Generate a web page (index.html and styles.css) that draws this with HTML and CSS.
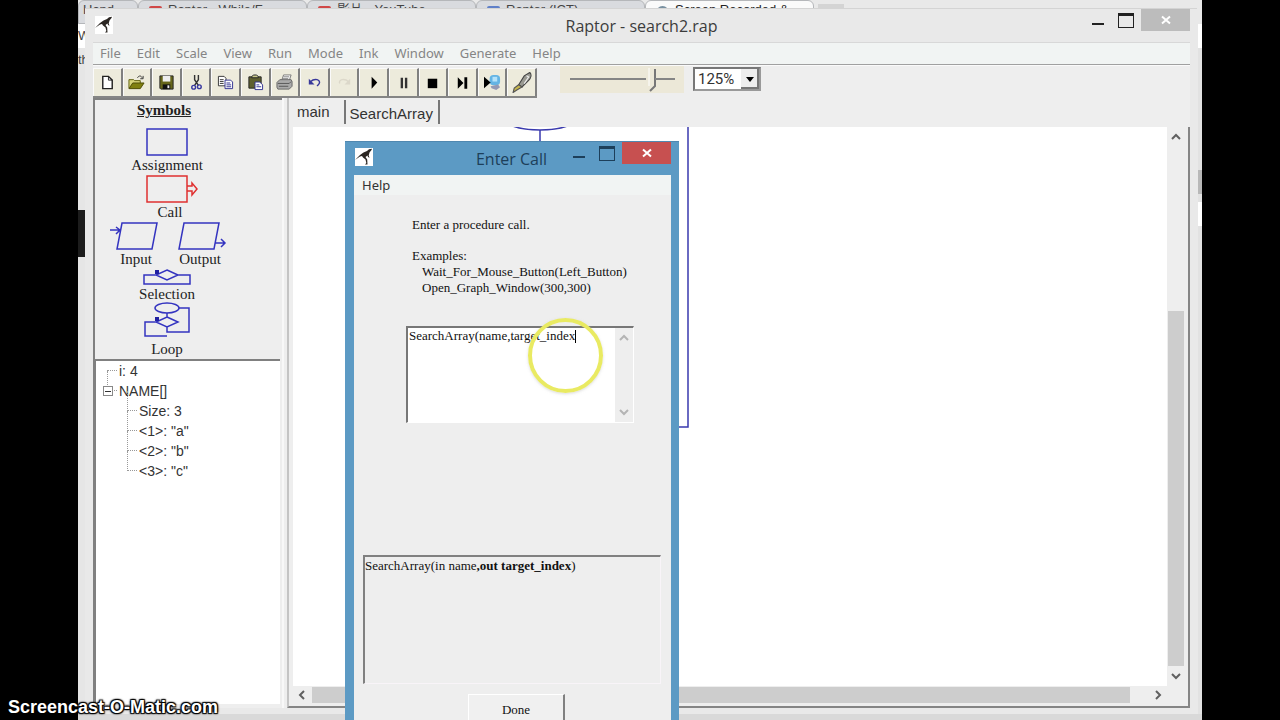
FILE: index.html
```html
<!DOCTYPE html>
<html lang="en">
<head>
<meta charset="utf-8">
<title>Raptor - search2.rap</title>
<link rel="stylesheet" href="styles.css">
</head>
<body>
<svg class="defs" width="0" height="0" aria-hidden="true">
  <symbol id="raptor" viewBox="0 0 18 18">
    <path fill="#fff" d="M0 0h18v18H0z"/>
    <path fill="#2b2622" d="M17 .800l-3 .500-2 1.700-3.500 1.500-3.500 2.500L0 12l5-3.500 2-.500 1 1.500 2.500 2 .800 3.500-1.300 1.500h2.500l-.300-5-1.700-2.500 2-1.500.500 1.500 1.500.800-.800-2.300.800-3 2-2.500z"/>
  </symbol>
  <symbol id="up" viewBox="0 0 10 10"><path d="M1 7l4-4 4 4" fill="none" stroke="currentColor" stroke-width="2"/></symbol>
  <symbol id="cross" viewBox="0 0 10 10"><path d="M1 1.500l8 7M9 1.500l-8 7" stroke="#fff" stroke-width="2"/></symbol>
</svg>

<div class="desktop">
  <div class="browser">
    <div class="tabs">
      <div class="tab">Hand</div>
      <div class="tab"><i class="fav red"></i>Raptor - While/F</div>
      <div class="tab"><i class="fav red"></i>影片 - YouTube</div>
      <div class="tab"><i class="fav blue"></i>Raptor (ICT)</div>
      <div class="tab current"><i class="fav round"></i>Screen Recorded &amp;</div>
      <div class="new"></div>
    </div>
    <div class="edges">
      <div class="edge-left"><span class="addr">W</span><span class="mark">th</span><i class="dark"></i></div>
      <div class="edge-right"><i class="white"></i><i class="thumb"></i><i class="white"></i></div>
    </div>
    <div class="bottom"></div>
  </div>

  <main class="window">
    <header class="title">
      <svg class="logo"><use href="#raptor"/></svg>
      <h1>Raptor - search2.rap</h1>
      <div class="controls">
        <button class="min" aria-label="Minimize"></button>
        <button class="max" aria-label="Maximize"></button>
        <button class="close" aria-label="Close"><svg width="10" height="10"><use href="#cross"/></svg></button>
      </div>
    </header>
    <nav class="menu">
      <button>File</button><button>Edit</button><button>Scale</button><button>View</button><button>Run</button><button>Mode</button><button>Ink</button><button>Window</button><button>Generate</button><button>Help</button>
    </nav>
    <div class="toolbar">
      <div class="tools">
        <button aria-label="New"><svg viewBox="0 0 18 18"><path d="M4 2.500h6l4 4v9H4z" fill="#fff" stroke="#222" stroke-width="1.500"/><path d="M10 2.500v4h4" fill="none" stroke="#222"/></svg></button>
        <button aria-label="Open"><svg viewBox="0 0 18 18"><path d="M1 15V6h5l1 1h6v3" fill="#d9d67c" stroke="#5f5f0d"/><path d="M1 15.500l4-6h12l-4 6z" fill="#808010" stroke="#4b4b05"/><path d="M10 4c2-3 4-2 5 0m1-2v3h-3" fill="none" stroke="#333"/></svg></button>
        <button aria-label="Save"><svg viewBox="0 0 18 18"><path d="M2 2h14v14H3l-1-1z" fill="#66661a" stroke="#222"/><path d="M5 2h8v6H5z" fill="#eee"/><path d="M5 11h8v5H5z" fill="#111"/><path d="M10 12h2v3h-2z" fill="#eee"/></svg></button>
        <button aria-label="Cut"><svg viewBox="0 0 18 18"><path d="M7 1v5l4 6M11 1v5l-4 6" fill="none" stroke="#333" stroke-width="1.500"/><circle cx="6" cy="14" r="2" fill="none" stroke="#3838a0" stroke-width="1.500"/><circle cx="12" cy="13.500" r="2" fill="none" stroke="#3838a0" stroke-width="1.500"/></svg></button>
        <button aria-label="Copy"><svg viewBox="0 0 18 18"><path d="M1.500 2.500h6l2 2v8h-8z" fill="#fff" stroke="#333"/><path d="M3 6h4M3 8h4M3 10h4" stroke="#333"/><path d="M8.500 6.500h6l2 2v7h-8z" fill="#fff" stroke="#303090"/><path d="M10 9.500h4M10 11.500h5M10 13.500h5" stroke="#303090"/></svg></button>
        <button aria-label="Paste"><svg viewBox="0 0 18 18"><path d="M2 3h13v12H2z" fill="#5f6030" stroke="#222"/><path d="M5 4c0-2 1-3 3.500-3S12 2 12 4z" fill="#c9c98c" stroke="#222"/><path d="M8.500 8.500h5l3 3v5h-8z" fill="#fff" stroke="#303090"/><path d="M10 11.500h3M10 13.500h5" stroke="#303090"/></svg></button>
        <button aria-label="Print"><svg viewBox="0 0 18 18"><path d="M6 7l2-6h8l-2 6z" fill="#fff" stroke="#777"/><path d="M8 3h6M7 5h6" stroke="#777"/><path d="M1 9l3-3h12l1 2v5l-3 3H2l-1-2z" fill="#aaa" stroke="#666"/><path d="M2 10h12l2-2M3 13h10" fill="none" stroke="#555"/></svg></button>
        <button aria-label="Undo"><svg viewBox="0 0 18 18"><path d="M5 8c4-4 11-2 9 2-.500 1-1 2-2.500 2.500" fill="none" stroke="#38389a" stroke-width="1.500"/><path d="M3 5v6h6z" fill="#38389a"/></svg></button>
        <button aria-label="Redo" disabled><svg viewBox="0 0 18 18"><path d="M13 8c-4-4-11-2-9 2" fill="none" stroke="#dcd8ca" stroke-width="1.500"/><path d="M15 5v6H9z" fill="#dcd8ca"/></svg></button>
        <button aria-label="Play"><svg viewBox="0 0 18 18"><path d="M7 3l6 6-6 6.500z"/></svg></button>
        <button aria-label="Pause"><svg viewBox="0 0 18 18"><path d="M6 4h2.500v11H6zM10.500 4H13v11h-2.500z" fill="#333"/></svg></button>
        <button aria-label="Stop"><svg viewBox="0 0 18 18"><path d="M4 5h10v10H4z"/></svg></button>
        <button aria-label="Step"><svg viewBox="0 0 18 18"><path d="M4 3.500l6 6-6 6zM11 3.500h3v12h-3z"/></svg></button>
        <button aria-label="Test server"><svg viewBox="0 0 18 18"><rect x="6" y="1" width="11" height="11" rx="4" fill="#64b4e4"/><path d="M9 3h5v5H9z" fill="#b4e2fa"/><path d="M7 13l8-2 2 3-4 3-5-2z" fill="#9399b4"/><path d="M0 3l7 6-7 6z"/></svg></button>
        <button class="pen" aria-label="Pen"><svg viewBox="0 0 18 18"><path d="M16 0c2 2 1 5-1 7l-6 6-3-2 5-8z" fill="#9a9a92" stroke="#444"/><path d="M6 11l3 2-5 3-3 2 1-4z" fill="#c4b44c" stroke="#555"/><path d="M13 3l2 1-4 6" fill="none" stroke="#eee"/></svg></button>
      </div>
      <input class="speed" type="range" min="0" max="100" value="90" aria-label="Speed">
      <select class="zoom" aria-label="Zoom"><option>125%</option></select>
    </div>

    <div class="work">
      <aside class="side">
        <section class="symbols">
          <h2>Symbols</h2>
          <button><svg width="62" height="28"><path d="M11 1h40v26H11z"/></svg>Assignment</button>
          <button class="call"><svg width="62" height="28"><path d="M11 1h40v26H11zM51 11h5V8l5 6-5 6v-4h-5"/></svg><span>Call</span></button>
          <div class="pair">
            <button><svg width="54" height="28"><path d="M13 1h35l-5 26H8zM1 8h10M7 5l4 3-4 4"/></svg>Input</button>
            <button><svg width="54" height="28"><path d="M11 1h35l-5 26H6zM42 21h10M48 17l4 4-4 4"/></svg>Output</button>
          </div>
          <button class="tight"><svg width="50" height="16"><path d="M14 6H2v9h46V6H36M25 1l11 5-11 5-11-5z"/><path class="dot" d="M13 1h4v4h-4z"/></svg>Selection</button>
          <button class="loop"><svg width="50" height="36"><ellipse cx="25" cy="6" rx="12" ry="5"/><path d="M37 6h10v24H25v-5M25 11v4M25 15l11 5-11 5-11-5zM14 20H3v14h22"/><path class="dot" d="M13 15h4v4h-4z"/></svg>Loop</button>
        </section>
        <section class="watch">
          <ul class="tree">
            <li>i: 4</li>
            <li class="open"><button aria-label="Collapse NAME"></button>NAME[]
              <ul><li>Size: 3</li><li>&lt;1&gt;: "a"</li><li>&lt;2&gt;: "b"</li><li>&lt;3&gt;: "c"</li></ul>
            </li>
          </ul>
        </section>
      </aside>
      <section class="charts">
        <div class="chart-tabs"><button class="on">main</button><button>SearchArray</button></div>
        <div class="view">
          <div class="canvas"><svg width="420" height="310"><ellipse cx="247" cy="-10" rx="38" ry="13"/><path d="M247 3v20M300 300h95V0"/></svg></div>
          <div class="vbar"><svg><use href="#up"/></svg><i></i><svg class="down"><use href="#up"/></svg></div>
          <div class="hbar"><svg class="left"><use href="#up"/></svg><i></i><svg class="right"><use href="#up"/></svg></div>
        </div>
      </section>
    </div>
  </main>

  <div class="dialog" role="dialog" aria-label="Enter Call">
    <header class="title">
      <svg class="logo"><use href="#raptor"/></svg>
      <h2>Enter Call</h2>
      <div class="controls">
        <button class="min" aria-label="Minimize"></button>
        <button class="max" aria-label="Maximize"></button>
        <button class="close" aria-label="Close"><svg width="10" height="10"><use href="#cross"/></svg></button>
      </div>
    </header>
    <nav class="dialog-menu"><button>Help</button></nav>
    <div class="form">
      <label class="intro" for="call">Enter a procedure call.</label>
      <div class="examples">Examples:
        <p>Wait_For_Mouse_Button(Left_Button)</p>
        <p>Open_Graph_Window(300,300)</p>
      </div>
      <div class="entry">
        <textarea id="call" spellcheck="false">SearchArray(name,target_index</textarea>
        <div class="entry-bar"><svg><use href="#up"/></svg><svg class="down"><use href="#up"/></svg></div>
        <i class="caret"></i>
        <i class="ring"></i>
      </div>
      <div class="hint">SearchArray(in name<b>,out target_index</b>)</div>
      <button class="done">Done</button>
    </div>
  </div>
</div>
<div class="watermark">Screencast-O-Matic.com</div>
</body>
</html>
```
FILE: styles.css
```css
* { box-sizing: border-box; }
body { margin: 0; background: #000; font-family: "Liberation Sans", Arial, sans-serif; overflow: hidden; }
h1, h2, p, ul { margin: 0; padding: 0; font-weight: normal; }
ul { list-style: none; }
button { border: 0; padding: 0; background: none; font: inherit; color: inherit; }
.defs { position: absolute; }

.desktop { position: relative; height: 100vh; margin: 0 78px; background: #e9e9e9; overflow: hidden; }

/* browser behind the windows */
.browser { display: flex; flex-direction: column; height: 100%; font: 13px/16px "Liberation Sans", "Noto Sans CJK TC", sans-serif; color: #444; }
.tabs { display: flex; height: 24px; }
.tab { display: flex; gap: 6px; width: 169px; padding: 1px 10px 0; white-space: nowrap; overflow: hidden; background: #d9dbdf; border: 1px solid #b5b7ba; border-radius: 6px 6px 0 0; }
.tab:first-child { width: 60px; padding-left: 4px; }
.tab.current { background: #fafafa; color: #222; }
.new { width: 26px; background: #d4d4d4; height: 9px; margin: 4px; }
.fav { width: 13px; height: 13px; margin-top: 4px; background: #d04848; border-radius: 2px; }
.fav.blue { background: #fff; border: 2px solid #6080c8; }
.fav.round { background: #7890a0; border-radius: 50%; }
.edges { display: flex; justify-content: space-between; flex: 1; }
.edge-left { width: 7px; overflow: hidden; display: flex; flex-direction: column; background: #e6e6e6; }
.edge-left span { height: 24px; line-height: 24px; }
.edge-left .addr { background: #fff; }
.edge-left .dark { margin-top: 138px; height: 47px; background: #1c1c1c; }
.edge-right { width: 4px; display: flex; flex-direction: column; gap: 8px; background: #e2e2e2; }
.edge-right .white { height: 24px; background: #fff; }
.edge-right .thumb { height: 24px; margin-top: 114px; background: #b8b8b8; }
.bottom { height: 6px; background: #d9d9d9; }

/* window frames */
.window { position: absolute; top: 8px; left: 7px; right: 5px; bottom: 6px; display: flex; flex-direction: column; padding: 0 7px 6px 8px; background: #e9e9e9; border-top: 1px solid #d4d4d4; }
.title { position: relative; display: flex; align-items: center; justify-content: center; height: 33px; font: 16px/24px "Open Sans", "Noto Sans", sans-serif; color: #3c3c3c; }
.title h1, .title h2 { font-size: inherit; }
.logo { position: absolute; left: 2px; top: 7px; width: 18px; height: 18px; }
.controls { position: absolute; right: 0; top: 0; display: flex; }
.controls button { width: 28px; height: 22px; display: flex; align-items: center; justify-content: center; }
.controls .min::before { content: ""; width: 12px; height: 2px; background: #222; margin-top: 8px; }
.controls .max::before { content: ""; width: 14px; height: 11px; border: 1px solid #222; border-top-width: 3px; }
.controls .close { width: 49px; margin-left: 1px; background: #bcbcbc; }

.menu { display: flex; gap: 16px; height: 23px; padding: 0 7px; background: #f1f4f3; border-top: 1px solid #d8d8d8; border-bottom: 1px solid #a0a0a0; font: 13px/20px "Noto Sans", sans-serif; color: #858585; }
.menu button { height: 19px; }

.toolbar { display: flex; align-items: flex-start; height: 33px; background: #eee; border-top: 1px solid #fafafa; }
.tools { display: flex; width: 444px; margin-top: 2px; border-bottom: 2px solid #858585; }
.tools button { flex: 1; height: 28px; display: flex; align-items: center; justify-content: center; background: #edebdc; border: 1px solid #fafafa; border-right: 2px solid #808080; border-bottom: 0; }
.tools svg { width: 17px; height: 17px; }
.tools .pen svg { width: 20px; height: 21px; }
.speed { appearance: none; width: 124px; height: 27px; margin: 0 0 0 23px; padding: 0 10px; background: linear-gradient(#858585, #858585) 50% 12px / 105px 2px no-repeat #ece8d8; }
.speed::-webkit-slider-thumb { appearance: none; width: 20px; height: 27px; background: #ece8d8 url("data:image/svg+xml,%3Csvg xmlns='http://www.w3.org/2000/svg' width='20' height='27'%3E%3Cpath d='M9 3v17l-5 5' fill='none' stroke='%23777' stroke-width='2'/%3E%3Cpath d='M3 2v18' stroke='%23fff'/%3E%3Cpath d='M9 13h11' stroke='%23858585' stroke-width='2'/%3E%3C/svg%3E"); }
.zoom { appearance: none; width: 68px; height: 24px; margin: 1px 0 0 9px; padding: 0 0 0 3px; border: 2px solid #777; border-right-color: #999; border-bottom-color: #999; border-radius: 0; color: #333; font: 15px/18px Roboto, sans-serif; background: #fff url("data:image/svg+xml,%3Csvg xmlns='http://www.w3.org/2000/svg' width='18' height='20'%3E%3Cpath d='M0 0h18v20H0z' fill='%23eee'/%3E%3Cpath d='M17 0v19H0' fill='none' stroke='%23777' stroke-width='2'/%3E%3Cpath d='M5 8h8l-4 5z'/%3E%3C/svg%3E") right center no-repeat; }

/* work area */
.work { display: flex; flex: 1; min-height: 0; background: #eee; }
.side { display: flex; flex-direction: column; width: 191px; padding-bottom: 4px; border-right: 2px solid #f8f8f8; }
.symbols { display: flex; flex-direction: column; align-items: center; height: 261px; padding: 2px 43px 0 0; border-top: 2px solid #808080; border-left: 2px solid #808080; font: 15px/17px "Liberation Serif", serif; color: #222; }
.symbols h2 { font-size: 15px; font-weight: bold; text-decoration: underline; line-height: 17px; margin-bottom: 9px; padding-right: 6px; }
.symbols button { display: flex; flex-direction: column; align-items: center; height: 47px; gap: 1px; color: #222; }
.symbols svg { flex: none; fill: none; stroke: #3434c0; stroke-width: 1.5; }
.symbols .call svg { stroke: #e03030; }
.symbols .call span { padding-left: 6px; }
.symbols svg .dot { fill: #2020a0; stroke: none; }
.pair { display: flex; gap: 10px; padding-left: 2px; }
.symbols .tight { height: 33px; }
.symbols .loop { gap: 3px; height: 57px; }
.watch { flex: 1; margin-right: 2px; padding: 0 0 0 8px; background: #fff; border-top: 2px solid #808080; border-left: 3px solid #808080; font-size: 14px; line-height: 20px; color: #333; }
.tree li { position: relative; padding-left: 15px; }
.tree li::before { content: ""; position: absolute; left: 3px; top: 9px; width: 10px; border-top: 1px dotted #999; }
.tree > li:first-child::after { content: ""; position: absolute; left: 3px; top: 10px; height: 16px; border-left: 1px dotted #999; }
.tree ul li { padding-left: 20px; }
.tree ul li::before { left: 8px; }
.tree ul li::after { content: ""; position: absolute; left: 8px; top: -10px; height: 20px; border-left: 1px dotted #999; }
.open > button { position: absolute; left: -1px; top: 5px; width: 10px; height: 10px; border: 1px solid #888; background: linear-gradient(#333, #333) center / 6px 1px no-repeat #fff; }

.charts { display: flex; flex-direction: column; flex: 1; min-width: 0; margin-left: 3px; border-left: 2px solid #c4c4c4; border-bottom: 2px solid #858585; }
.chart-tabs { display: flex; align-items: flex-start; height: 29px; padding: 2px 0 0; font-size: 15px; line-height: 24px; color: #333; }
.chart-tabs button { height: 24px; padding: 2px 5px 0 4px; border-right: 2px solid #777; }
.chart-tabs .on { padding: 0 14px 0 8px; }
.view { flex: 1; min-height: 0; display: grid; grid-template: 1fr 17px / 1fr 17px; padding: 0 4px 3px 4px; border-right: 2px solid #858585; }
.canvas { background: #fff; overflow: hidden; }
.canvas svg { display: block; fill: none; stroke: #3a3aae; stroke-width: 1.5; }
.vbar, .hbar { display: flex; align-items: center; color: #606060; }
.vbar { flex-direction: column; padding: 5px 0; }
.vbar i { flex: 1; width: 16px; margin: 169px 0 5px; background: #cdcdcd; }
.hbar { padding: 0 4px; }
.hbar i { flex: 1; height: 16px; margin: 0 23px 0 5px; background: #cdcdcd; }
.vbar svg, .hbar svg, .entry-bar svg { width: 10px; height: 10px; flex: none; }
.down { transform: rotate(180deg); }
.left { transform: rotate(-90deg); }
.right { transform: rotate(90deg); }

/* call dialog */
.dialog { position: absolute; left: 267px; top: 141px; bottom: 0; width: 334px; display: flex; flex-direction: column; padding: 0 8px 0 9px; background: #5c9ac4; border: 1px solid #5088b0; border-width: 1px 0 0; overflow: hidden; }
.dialog .title { flex: none; padding-right: 2px; color: #1d3f5a; }
.dialog .logo { left: 1px; top: 6px; }
.dialog .title .close { background: #c75050; }
.dialog .controls .min::before { background: #1d3f5a; }
.dialog .controls .max::before { border-color: #1d3f5a; }
.dialog-menu { padding: 0 8px; height: 20px; background: #f1f4f3; font: 13px/20px "Noto Sans", sans-serif; color: #333; }
.form { flex: 1; display: flex; flex-direction: column; padding: 22px 10px 0 9px; background: #eee; font: 13px/16px "Liberation Serif", serif; color: #111; }
.intro { margin-left: 49px; }
.examples { margin: 15px 0 0 49px; }
.examples p { padding-left: 10px; }
.entry { position: relative; display: flex; width: 228px; height: 97px; margin: 30px 0 0 43px; border: 2px solid #777; border-right: 1px solid #fff; border-bottom: 1px solid #fff; }
.entry textarea { flex: 1; min-width: 0; padding: 0 1px; border: 0; outline: 0; resize: none; background: #fff; font: inherit; color: inherit; overflow: hidden; }
.entry-bar { display: flex; flex-direction: column; justify-content: space-between; align-items: center; width: 18px; padding: 5px 0; background: #eee; color: #b4b4b4; }
.caret { position: absolute; left: 167px; top: 2px; width: 1px; height: 13px; background: #000; }
.ring { position: absolute; left: 120px; top: -10px; width: 75px; height: 75px; border: 4px solid #e9ea62; border-radius: 50%; box-shadow: 0 1px 3px #bbb8; }
.hint { height: 129px; margin-top: 132px; padding: 1px 0 0; border: 2px solid #808080; border-right: 1px solid #f8f4f8; border-bottom: 1px solid #f8f4f8; }
.done { width: 97px; height: 36px; margin: 10px 0 0 105px; padding-bottom: 3px; background: #f0f0f0; border: 1px solid #fff; border-right: 2px solid #808080; border-bottom: 2px solid #808080; }

.watermark { position: absolute; left: 8px; bottom: 3px; font: bold 18px/20px "Liberation Sans", sans-serif; color: #fff; text-shadow: 1px 1px 1px #000, -1px -1px 1px #000, 1px -1px 1px #000, -1px 1px 1px #000, 0 0 3px #000; }
```
